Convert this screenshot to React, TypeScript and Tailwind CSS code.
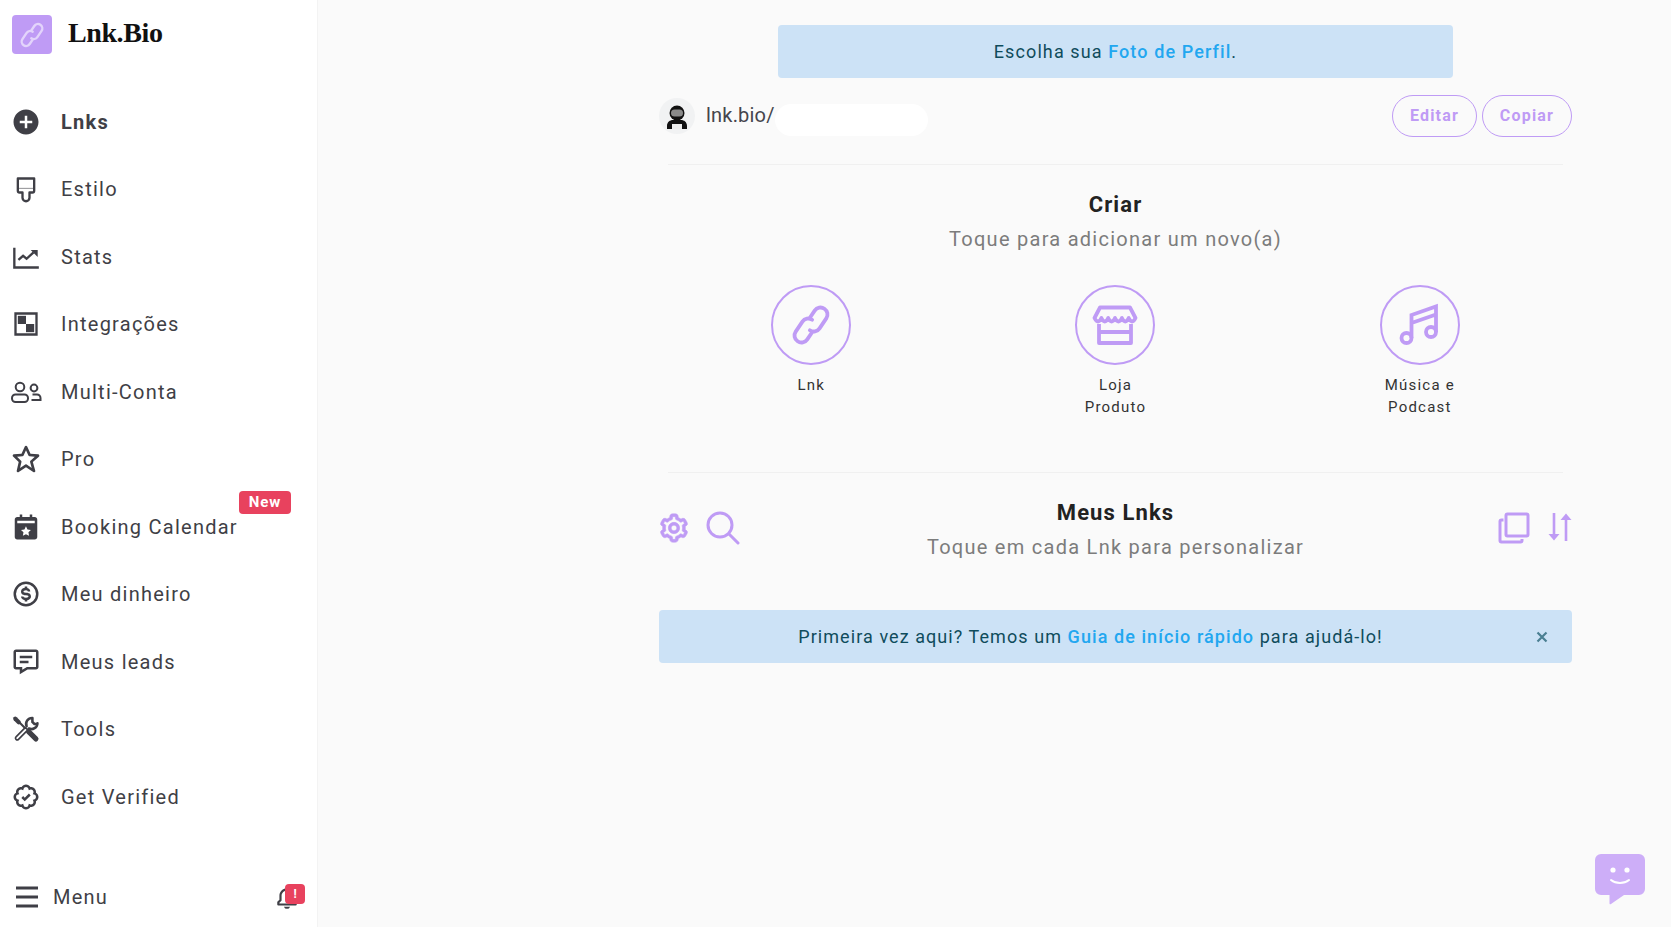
import React from 'react';
import {
  BiSolidPlusCircle, BiStar, BiSolidCalendarStar, BiDollarCircle, BiMessageDetail,
  BiBadgeCheck, BiBell, BiCog,
} from 'react-icons/bi';

type IconProps = { size?: number; className?: string };

const Checker: React.FC<IconProps> = ({ size = 28, className }) => (
  <svg viewBox="0 0 24 24" width={size} height={size} className={className} fill="currentColor">
    <path d="M2 2h20v20H2zm2 2v16h16V4z" />
    <rect x="5" y="5" width="7" height="7" />
    <rect x="12" y="12" width="7" height="7" />
  </svg>
);

const Brush: React.FC<IconProps> = ({ size = 28, className }) => (
  <svg viewBox="0 0 24 24" width={size} height={size} className={className} fill="none" stroke="currentColor" strokeWidth="2" strokeLinejoin="round">
    <path d="M5 3h14v10.5a1.5 1.5 0 0 1-1.5 1.5H15v4.5a3 3 0 0 1-6 0V15H6.5A1.5 1.5 0 0 1 5 13.5z" />
    <path d="M5 11.5h14" strokeWidth="1" opacity="0.5" />
  </svg>
);

const Chart: React.FC<IconProps> = ({ size = 28, className }) => (
  <svg viewBox="0 0 24 24" width={size} height={size} className={className} fill="none" stroke="currentColor">
    <path d="M2 4v17h21" strokeWidth="2" />
    <path d="M5.5 14.5l4-3.5 3 2.5 6-5.5" strokeWidth="2" />
    <path d="M16 6h6v6z" fill="currentColor" stroke="none" />
  </svg>
);

const Group: React.FC<IconProps> = ({ className }) => (
  <svg viewBox="0 0 32 24" width={32} height={24} className={className} fill="none" stroke="currentColor" strokeWidth="2">
    <circle cx="10" cy="7" r="4.3" />
    <rect x="2" y="14.5" width="16" height="7.5" rx="3.5" />
    <circle cx="24" cy="8" r="3.4" />
    <path d="M22.5 14.5h4.5a3.5 3.5 0 0 1 3.5 3.5v2h-9" />
  </svg>
);

const Tools: React.FC<IconProps> = ({ size = 28, className }) => (
  <svg viewBox="0 0 24 24" width={size} height={size} className={className} fill="none" stroke="currentColor" strokeLinecap="round">
    <path d="M2.8 3.2l3 3" strokeWidth="3.6" />
    <path d="M6 6l6 6" strokeWidth="1.8" />
    <path d="M14 14l6.5 6.5" strokeWidth="4.4" />
    <path d="M11.5 12.8l-7 7" strokeWidth="4.4" />
    <path d="M11.5 12.8l-7 7" strokeWidth="1.6" stroke="#fff" />
    <path d="M17.5 2.5a5.2 5.2 0 0 0-5 7.2M21.8 7a5.2 5.2 0 0 1-7.4 4.6M17.5 2.5v3.5l1.7 1.7h2.6" strokeWidth="2.2" />
  </svg>
);

const Menu = () => (
  <svg viewBox="0 0 30 30" width={30} height={30} className="shrink-0" fill="none" stroke="currentColor" strokeWidth="3">
    <path d="M4 6h22M4 15h22M4 24h22" />
  </svg>
);

const Chain: React.FC<IconProps> = ({ size = 48, className }) => (
  <svg viewBox="0 0 48 48" width={size} height={size} className={className} fill="none" stroke="currentColor" strokeWidth="3.8" strokeLinecap="round">
    <g transform="rotate(34 24 24)">
      <path d="M19 18V10a7 7 0 0 1 14 0v12a7 7 0 0 1-7 7" />
      <path d="M29 30v8a7 7 0 0 1-14 0V26a7 7 0 0 1 7-7" />
    </g>
  </svg>
);

const Store: React.FC<IconProps> = ({ size = 48, className }) => (
  <svg viewBox="0 0 48 48" width={size} height={size} className={className} fill="none" stroke="currentColor" strokeWidth="3.8" strokeLinejoin="round">
    <path d="M9 6.5h30l5.5 10.5q-3.4 7-6.8 0q-3.4 7-6.8 0q-3.4 7-6.9 0q-3.4 7-6.8 0q-3.4 7-6.8 0q-3.4 7-6.9 0z" />
    <path d="M8 23v19h32V23M8 31h32" />
  </svg>
);

const Music: React.FC<IconProps> = ({ size = 48, className }) => (
  <svg viewBox="0 0 48 48" width={size} height={size} className={className} fill="none" stroke="currentColor" strokeWidth="3.8">
    <circle cx="10.5" cy="37" r="5" />
    <circle cx="35" cy="31" r="5" />
    <path d="M15.5 37V14L40 5.5V31M15.5 22L40 13.5" />
  </svg>
);

const Search = () => (
  <svg viewBox="0 0 34 34" width={34} height={34} fill="none" stroke="currentColor" strokeWidth="3" strokeLinecap="round">
    <circle cx="14" cy="14" r="12" />
    <path d="M23 23l9 9" />
  </svg>
);

const Copy = () => (
  <svg viewBox="0 0 32 32" width={32} height={32} fill="none" stroke="currentColor" strokeWidth="3" strokeLinejoin="round">
    <rect x="8" y="2" width="22" height="22" rx="1.5" />
    <path d="M5.5 8H3.5A1.5 1.5 0 0 0 2 9.5v19A1.5 1.5 0 0 0 3.5 30h19a1.5 1.5 0 0 0 1.5-1.5V27" />
  </svg>
);

const Sort = () => (
  <svg viewBox="0 0 24 30" width={24} height={30} fill="currentColor" stroke="none">
    <rect x="4.7" y="1" width="2.6" height="23" />
    <path d="M0.5 22h11L6 28.5z" />
    <rect x="16.7" y="6" width="2.6" height="23" />
    <path d="M12.5 8h11L18 1.5z" />
  </svg>
);

const Close = () => (
  <svg viewBox="0 0 12 12" width={12} height={12} fill="none" stroke="currentColor" strokeWidth="2.2">
    <path d="M1.5 1.5l9 9M10.5 1.5l-9 9" />
  </svg>
);

const Astronaut = () => (
  <svg viewBox="0 0 36 36" className="w-[36px] h-[36px]">
    <circle cx="18" cy="15" r="7.5" fill="#111" />
    <rect x="12" y="11.5" width="12" height="7" rx="3.5" fill="#8a8a8a" />
    <path d="M8 31v-3c0-4 3-6 6-6h8c3 0 6 2 6 6v3h-5v-3h-10v3z" fill="#111" />
    <rect x="13" y="26" width="10" height="5" fill="#eee" />
  </svg>
);

const navItems: { label: string; icon: React.FC<IconProps>; size?: number; bold?: boolean; badge?: string }[] = [
  { label: 'Lnks', icon: BiSolidPlusCircle, size: 30, bold: true },
  { label: 'Estilo', icon: Brush },
  { label: 'Stats', icon: Chart },
  { label: 'Integrações', icon: Checker },
  { label: 'Multi-Conta', icon: Group },
  { label: 'Pro', icon: BiStar, size: 32 },
  { label: 'Booking Calendar', icon: BiSolidCalendarStar, size: 30, badge: 'New' },
  { label: 'Meu dinheiro', icon: BiDollarCircle, size: 30 },
  { label: 'Meus leads', icon: BiMessageDetail, size: 30 },
  { label: 'Tools', icon: Tools },
  { label: 'Get Verified', icon: BiBadgeCheck, size: 30 },
];

const createItems = [
  { icon: Chain, lines: ['Lnk'] },
  { icon: Store, lines: ['Loja', 'Produto'] },
  { icon: Music, lines: ['Música e', 'Podcast'] },
];

const App: React.FC = () => {
  return (
    <div className="flex h-[927px] overflow-hidden bg-[#fafafa] font-['Roboto',sans-serif] text-[#3f3f46]">
      {/* SIDEBAR */}
      <aside className="w-[318px] shrink-0 h-full bg-white border-r border-[#f3f3f3] flex flex-col">
        <div className="h-[88px] pl-[12px] pt-[15px] flex items-start">
          <div className="w-[40px] h-[39px] rounded-[4px] bg-[#bf9bf5] flex items-center justify-center">
            <Chain size={30} className="text-[#e3d4fb]" />
          </div>
          <span className="ml-[16px] mt-[2px] font-['Liberation_Serif',serif] font-bold text-[28px] leading-[32px] tracking-[-0.4px] text-[#111]">Lnk.Bio</span>
        </div>

        <nav className="flex flex-col">
          {navItems.map((item) => (
            <div key={item.label} className="relative h-[67.5px] flex items-center pl-[12px]">
              <span className="w-[28px] shrink-0 flex items-center justify-center">
                <item.icon size={item.size ?? 28} className="shrink-0 text-[#3f3f46]" />
              </span>
              <span className={`ml-[21px] text-[20px] tracking-[1.25px] ${item.bold ? 'font-bold' : ''}`}>{item.label}</span>
              {item.badge && (
                <span className="absolute left-[239px] top-[-2px] w-[52px] h-[23px] rounded-[4px] bg-[#e8425e] text-white text-[15px] font-bold tracking-[1px] flex items-center justify-center">
                  {item.badge}
                </span>
              )}
            </div>
          ))}
        </nav>

        <div className="mt-auto h-[60px] pl-[12px] flex items-center relative">
          <Menu />
          <span className="ml-[11px] text-[20px] tracking-[1.25px]">Menu</span>
          <div className="absolute left-[274px] top-[18px]">
            <BiBell size={26} className="text-[#3f3f46]" />
            <span className="absolute left-[11px] top-[-1px] w-[20px] h-[20px] rounded-[4px] bg-[#e8425e] text-white text-[12px] font-bold flex items-center justify-center">!</span>
          </div>
        </div>
      </aside>

      {/* MAIN */}
      <main className="flex-1 relative pl-[341px]">
        <div className="w-[913px] flex flex-col">
          <div className="mt-[25px] mx-auto w-[675px] h-[53px] rounded-[4px] bg-[#cce2f6] flex items-center justify-center text-[18px] tracking-[1.1px] text-[#0f4c5c]">
            <span>Escolha sua <a className="font-medium text-[#22a7f0]">Foto de Perfil</a>.</span>
          </div>

          <div className="mt-[17px] h-[69px] flex items-start justify-between">
            <div className="flex items-start pt-[3px]">
              <div className="w-[36px] h-[36px] rounded-full bg-[#f1f2f3] flex items-center justify-center">
                <Astronaut />
              </div>
              <span className="ml-[11px] text-[20px] leading-[34px] tracking-[0.2px] text-[#45454d]">lnk.bio/</span>
              <span className="mt-[6px] inline-block w-[153px] h-[32px] rounded-full bg-white"></span>
            </div>
            <div className="flex gap-[5px]">
              <button className="w-[85px] h-[42px] rounded-full border border-[#bf9bf5] text-[#bf9bf5] text-[16px] font-bold tracking-[1.2px]">Editar</button>
              <button className="w-[90px] h-[42px] rounded-full border border-[#bf9bf5] text-[#bf9bf5] text-[16px] font-bold tracking-[1.2px]">Copiar</button>
            </div>
          </div>

          <div className="mx-[9px] h-px bg-[#f0f0f0]"></div>

          <div className="mt-[26px] text-center">
            <h2 className="text-[22px] leading-[28px] font-bold tracking-[1.1px] text-[#222]">Criar</h2>
            <p className="mt-[6px] text-[20px] leading-[28px] tracking-[1.27px] text-[#7c7c7c]">Toque para adicionar um novo(a)</p>
          </div>

          <div className="mt-[32px] h-[160px] grid grid-cols-3">
            {createItems.map((c) => (
              <div key={c.lines[0]} className="flex flex-col items-center">
                <div className="w-[80px] h-[80px] rounded-full border-2 border-[#bf9bf5] flex items-center justify-center">
                  <c.icon size={48} className="text-[#bf9bf5]" />
                </div>
                <div className="mt-[9px] text-center text-[15px] leading-[22px] tracking-[1.2px] text-[#333]">
                  {c.lines.map((l) => <div key={l}>{l}</div>)}
                </div>
              </div>
            ))}
          </div>

          <div className="mt-[27px] mx-[9px] h-px bg-[#f0f0f0]"></div>

          <div className="mt-[26px] relative text-center">
            <h2 className="text-[22px] leading-[28px] font-bold tracking-[1.1px] text-[#222]">Meus Lnks</h2>
            <p className="mt-[6px] text-[20px] leading-[28px] tracking-[1.27px] text-[#7c7c7c]">Toque em cada Lnk para personalizar</p>
            <div className="absolute left-0 top-[12px] flex items-start gap-[15px] text-[#bf9bf5]">
              <BiCog size={34} className="-ml-[2px]" stroke="currentColor" strokeWidth={0.4} />
              <span><Search /></span>
            </div>
            <div className="absolute right-0 top-[13px] flex items-start gap-[18px] text-[#bf9bf5]">
              <Copy />
              <Sort />
            </div>
          </div>

          <div className="mt-[49px] h-[53px] rounded-[4px] bg-[#cce2f6] relative flex items-center justify-center pr-[50px] text-[18px] tracking-[1.07px] text-[#0f4c5c]">
            <span>Primeira vez aqui? Temos um <a className="font-medium text-[#22a7f0]">Guia de início rápido</a> para ajudá-lo!</span>
            <span className="absolute right-[24px] top-[21px] text-[#4a7f92]"><Close /></span>
          </div>
        </div>

        {/* CHAT */}
        <svg viewBox="0 0 50 51" className="absolute right-[26px] bottom-[22px] w-[50px] h-[51px]">
          <path d="M6 0h38a6 6 0 0 1 6 6v29a6 6 0 0 1-6 6H29L16 50c-1 .6-1.5 0-1.5-1v-8H6a6 6 0 0 1-6-6V6a6 6 0 0 1 6-6z" fill="#cdaef8" />
          <circle cx="18" cy="16" r="2.6" fill="#fff" />
          <circle cx="32" cy="16" r="2.6" fill="#fff" />
          <path d="M16 26c5 4 13 4 18 0" fill="none" stroke="#fff" strokeWidth="2" strokeLinecap="round" />
        </svg>
      </main>
    </div>
  );
};

export default App;
